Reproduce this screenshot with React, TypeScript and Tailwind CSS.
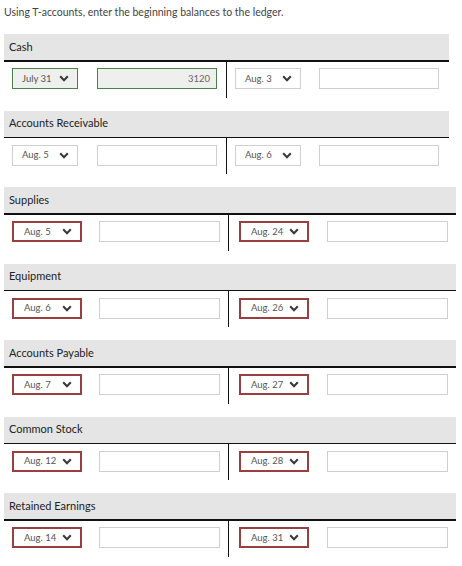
import React from "react";

type Entry = { date: string; value?: string };
type Account = { name: string; left: Entry; right: Entry; red?: boolean };

const accounts: Account[] = [
  { name: "Cash", left: { date: "July 31", value: "3120" }, right: { date: "Aug. 3" } },
  { name: "Accounts Receivable", left: { date: "Aug. 5" }, right: { date: "Aug. 6" } },
  { name: "Supplies", left: { date: "Aug. 5" }, right: { date: "Aug. 24" }, red: true },
  { name: "Equipment", left: { date: "Aug. 6" }, right: { date: "Aug. 26" }, red: true },
  { name: "Accounts Payable", left: { date: "Aug. 7" }, right: { date: "Aug. 27" }, red: true },
  { name: "Common Stock", left: { date: "Aug. 12" }, right: { date: "Aug. 28" }, red: true },
  { name: "Retained Earnings", left: { date: "Aug. 14" }, right: { date: "Aug. 31" }, red: true },
];

function Chevron() {
  return (
    <svg width="10" height="7" viewBox="0 0 10 7" className="shrink-0">
      <path d="M1.2 1.3 L5 5.2 L8.8 1.3" fill="none" stroke="#3a3a3a" strokeWidth="2.1" strokeLinejoin="miter" />
    </svg>
  );
}

function DateSelect({ date, red, filled, wide }: { date: string; red?: boolean; filled?: boolean; wide?: boolean }) {
  const box = red
    ? "border-2 border-[#9a3f3f] bg-white pl-[10px] pr-[8px]"
    : filled
    ? "border border-[#4f7f4f] bg-[#eef0ee] pl-[9px] pr-[8px]"
    : "border border-[#cfcfcf] bg-white pl-[9px] pr-[8px]";
  return (
    <div
      className={`flex items-center justify-between ${box} ${wide ? "w-[70px] h-[21px]" : "w-[66px] h-[21px]"}`}
    >
      <span className="text-[9.5px] text-[#555] leading-none">{date}</span>
      <Chevron />
    </div>
  );
}

function AmountInput({ value, wide }: { value?: string; wide?: boolean }) {
  return (
    <div
      className={`flex items-center justify-end pr-[6px] h-[21px] ${wide ? "w-[121px]" : "w-[120px]"} ${
        value ? "border border-[#4f7f4f] bg-[#eef0ee]" : "border border-[#cfcfcf] bg-white"
      }`}
    >
      <span className="text-[9.5px] text-[#666] leading-none">{value}</span>
    </div>
  );
}

function AccountBlock({ account }: { account: Account }) {
  const wide = !!account.red;
  return (
    <div className={`mb-[13px] ${wide ? "w-[452px]" : "w-[445px]"}`}>
      <div className="h-[26px] bg-[#e5e5e5] flex items-center pl-[5px]">
        <span className="text-[11px] text-[#222]">{account.name}</span>
      </div>
      <div className="h-[1.5px] bg-[#111]" />
      <div className="flex h-[36px]">
        <div
          className={`flex pt-[6.5px] pl-[8px] border-r border-[#111] ${wide ? "w-[225px] gap-[17px]" : "w-[223px] gap-[19px]"}`}
        >
          <DateSelect date={account.left.date} red={account.red} filled={!!account.left.value} wide={wide} />
          <AmountInput value={account.left.value} wide={wide} />
        </div>
        <div className={`flex pt-[6.5px] ${wide ? "pl-[10px] gap-[18px]" : "pl-[8px] gap-[18px]"}`}>
          <DateSelect date={account.right.date} red={account.red} wide={wide} />
          <AmountInput value={account.right.value} wide={wide} />
        </div>
      </div>
    </div>
  );
}

export default function App() {
  return (
    <div className="w-[462px] h-[566px] bg-white pl-[4px] pt-[6px]" style={{ fontFamily: "Lato, 'Open Sans', sans-serif" }}>
      <p className="text-[10.5px] text-[#444] leading-[13px] mb-[15px]">
        Using T-accounts, enter the beginning balances to the ledger.
      </p>
      {accounts.map((a) => (
        <AccountBlock key={a.name} account={a} />
      ))}
    </div>
  );
}
